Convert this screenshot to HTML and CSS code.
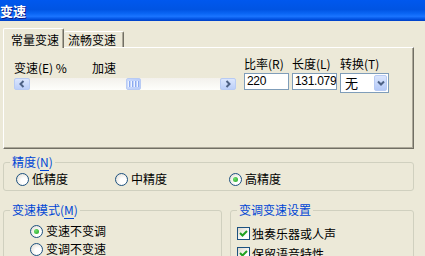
FILE: index.html
```html
<!DOCTYPE html>
<html>

<head>
    <meta charset="utf-8">
    <title>变速</title>
    <link rel="stylesheet" href="styles.css">
</head>

<body>
    <div class="titlebar"><span class="title">变速</span></div>
    <div class="client">
        <div class="tabs">
            <div class="tab active">常量变速</div>
            <div class="tab">流畅变速</div>
        </div>
        <div class="tabpanel">
            <div class="slider-col">
                <div class="slider-labels">
                    <span class="lbl-speed">变速(E) %</span>
                    <span>加速</span>
                </div>
                <div class="scrollbar">
                    <span class="sb-btn">
                        <svg width="8" height="8" viewBox="0 0 8 8">
                            <polyline points="5.5,1 2.5,4 5.5,7" fill="none" stroke="#4d6185" stroke-width="2" />
                        </svg>
                    </span>
                    <span class="sb-track"><span class="sb-thumb"><i></i><i></i><i></i><i></i></span></span>
                    <span class="sb-btn">
                        <svg width="8" height="8" viewBox="0 0 8 8">
                            <polyline points="2.5,1 5.5,4 2.5,7" fill="none" stroke="#4d6185" stroke-width="2" />
                        </svg>
                    </span>
                </div>
            </div>
            <div class="field ratio">
                <span class="lbl">比率(R)</span>
                <span class="edit">220</span>
            </div>
            <div class="field length">
                <span class="lbl">长度(L)</span>
                <span class="edit">131.079</span>
            </div>
            <div class="field convert">
                <span class="lbl">转换(T)</span>
                <span class="combo">
                    <span class="combo-text">无</span>
                    <span class="combo-btn">
                        <svg width="8" height="6" viewBox="0 0 8 6">
                            <polyline points="1,1.5 4,4.5 7,1.5" fill="none" stroke="#4d6185" stroke-width="2" />
                        </svg>
                    </span>
                </span>
            </div>
        </div>

        <fieldset class="group precision">
            <legend>精度(<u>N</u>)</legend>
            <div class="radio-row">
                <span class="opt opt-low"><span class="radio"></span>低精度</span>
                <span class="opt opt-mid"><span class="radio"></span>中精度</span>
                <span class="opt"><span class="radio checked"></span>高精度</span>
            </div>
        </fieldset>

        <div class="group-row">
            <fieldset class="group mode">
                <legend>变速模式(<u>M</u>)</legend>
                <div class="opt-list">
                    <span class="opt"><span class="radio checked"></span>变速不变调</span>
                    <span class="opt"><span class="radio"></span>变调不变速</span>
                </div>
            </fieldset>
            <fieldset class="group settings">
                <legend>变调变速设置</legend>
                <div class="check-list">
                    <span class="opt"><span class="check"><svg width="11" height="11" viewBox="0 0 11 11">
                                <polyline points="2,5 4.5,7.5 9,3" fill="none" stroke="#21a121" stroke-width="2" />
                            </svg></span>独奏乐器或人声</span>
                    <span class="opt"><span class="check"><svg width="11" height="11" viewBox="0 0 11 11">
                                <polyline points="2,5 4.5,7.5 9,3" fill="none" stroke="#21a121" stroke-width="2" />
                            </svg></span>保留语音特性</span>
                </div>
            </fieldset>
        </div>
    </div>
</body>

</html>
```

FILE: styles.css
```css
body {
    margin: 0;
    width: 425px;
    height: 256px;
    overflow: hidden;
    background: #ece9d8;
    font-family: "Noto Sans CJK SC", sans-serif;
    font-size: 12px;
    line-height: 14px;
    color: #000;
}

.titlebar {
    height: 21px;
    background: linear-gradient(#0058ee 0%, #0054e3 45%, #0a66f5 65%, #1a74ff 78%, #0050e0 92%, #003fc4 100%);
}

.title {
    display: block;
    padding-top: 3px;
    color: #fff;
    font-weight: bold;
    font-size: 13px;
    line-height: 15px;
    text-shadow: 1px 1px #0a1883;
}

.client {
    padding-left: 3px;
}

/* tabs */
.tabs {
    display: flex;
    align-items: flex-end;
    margin-top: 7px;
    height: 19px;
}

.tab {
    box-sizing: border-box;
    height: 16px;
    width: 60px;
    padding-left: 4px;
    line-height: 15px;
    border-top: 1px solid #fff;
    border-right: 1px solid #716f64;
    box-shadow: inset -1px 0 #aca899;
    border-radius: 2px 2px 0 0;
    background: #ece9d8;
}

.tab.active {
    position: relative;
    z-index: 1;
    height: 20px;
    width: 61px;
    margin-bottom: -1px;
    padding-left: 7px;
    padding-top: 3px;
    border-left: 1px solid #fff;
}

.tabpanel {
    box-sizing: border-box;
    display: flex;
    align-items: flex-start;
    width: 411px;
    height: 102px;
    padding: 9px 0 0 10px;
    border: 1px solid #716f64;
    border-top-color: #fff;
    border-left-color: #fff;
    box-shadow: inset -1px -1px #aca899;
}

.slider-col {
    width: 222px;
    margin-top: 4px;
}

.slider-labels {
    display: flex;
    height: 14px;
}

.lbl-speed {
    width: 78px;
}

.scrollbar {
    display: flex;
    height: 12px;
    margin-top: 3px;
}

.sb-btn {
    box-sizing: border-box;
    width: 16px;
    height: 12px;
    display: flex;
    align-items: center;
    justify-content: center;
    border: 1px solid #b8cbf4;
    border-radius: 2px;
    background: linear-gradient(#dbe6fd, #bccff9);
}

.sb-track {
    flex: 1;
    display: flex;
    background: linear-gradient(#f3f1ec, #fefefb);
}

.sb-thumb {
    box-sizing: border-box;
    width: 15px;
    height: 12px;
    margin-left: 96px;
    display: flex;
    align-items: center;
    justify-content: center;
    gap: 1px;
    border: 1px solid #b8cbf4;
    border-radius: 2px;
    background: linear-gradient(90deg, #cad9fc, #b9cdfa);
}

.sb-thumb i {
    width: 1px;
    height: 6px;
    background: #eef4fe;
    box-shadow: 1px 0 #8caaf0;
    margin-right: 1px;
}

.field {
    display: flex;
    flex-direction: column;
}

.ratio {
    margin-left: 8px;
    width: 45px;
}

.length {
    margin-left: 3px;
    width: 45px;
}

.convert {
    margin-left: 3px;
    width: 49px;
}

.lbl {
    height: 14px;
    white-space: nowrap;
}

.edit {
    box-sizing: border-box;
    margin-top: 2px;
    height: 17px;
    padding-left: 2px;
    border: 1px solid #7f9db9;
    background: #fff;
    font-family: "Liberation Sans", sans-serif;
    font-size: 12px;
    line-height: 15px;
    letter-spacing: -0.3px;
    white-space: nowrap;
    overflow: hidden;
}

.combo {
    box-sizing: border-box;
    margin-top: 2px;
    height: 20px;
    display: flex;
    justify-content: space-between;
    padding: 1px;
    border: 1px solid #7f9db9;
    background: #fff;
}

.combo-text {
    padding-left: 3px;
    line-height: 16px;
    font-size: 13px;
}

.combo-btn {
    box-sizing: border-box;
    width: 13px;
    height: 16px;
    display: flex;
    align-items: center;
    justify-content: center;
    border: 1px solid #b8cbf4;
    border-radius: 2px;
    background: linear-gradient(#dbe6fd, #b4c9f8);
}

/* group boxes */
.group {
    box-sizing: border-box;
    margin: 6px 0 0 0;
    padding: 0;
    border: 1px solid #d0d0bf;
    border-radius: 3px;
    min-width: 0;
}

.group legend {
    margin-left: 6px;
    padding: 0 2px;
    color: #0046d5;
    line-height: 14px;
}

.group legend u {
    text-decoration: none;
    border-bottom: 1px solid #0046d5;
}

.precision {
    width: 411px;
    padding-bottom: 4px;
}

.radio-row {
    display: flex;
    margin-top: 3px;
    padding-left: 12px;
}

.opt {
    display: flex;
    align-items: center;
    height: 14px;
    white-space: nowrap;
}

.opt-low {
    width: 99px;
}

.opt-mid {
    width: 114px;
}

.radio {
    box-sizing: border-box;
    width: 13px;
    height: 13px;
    margin-right: 3px;
    border: 1px solid #1c5180;
    border-radius: 50%;
    background: radial-gradient(circle at 65% 65%, #fff 30%, #dcd7cb 100%);
    display: flex;
    align-items: center;
    justify-content: center;
}

.radio.checked::after {
    content: "";
    width: 5px;
    height: 5px;
    border-radius: 50%;
    background: radial-gradient(circle at 35% 35%, #6fe06f, #21a121);
}

.group-row {
    display: flex;
    gap: 8px;
    margin-top: 12px;
}

.group-row .group {
    margin-top: 0;
    height: 80px;
}

.mode {
    width: 219px;
}

.opt-list {
    display: flex;
    flex-direction: column;
    gap: 4px;
    margin-top: 7px;
    padding-left: 26px;
}

.settings {
    width: 184px;
}

.check-list {
    display: flex;
    flex-direction: column;
    gap: 5px;
    margin-top: 9px;
    padding-left: 6px;
}

.check-list .opt {
    height: 15px;
}

.check {
    box-sizing: border-box;
    width: 13px;
    height: 13px;
    margin-right: 2px;
    border: 1px solid #1c5180;
    background: linear-gradient(135deg, #dcd7cb, #fff 70%);
    display: flex;
    align-items: center;
    justify-content: center;
}
```
